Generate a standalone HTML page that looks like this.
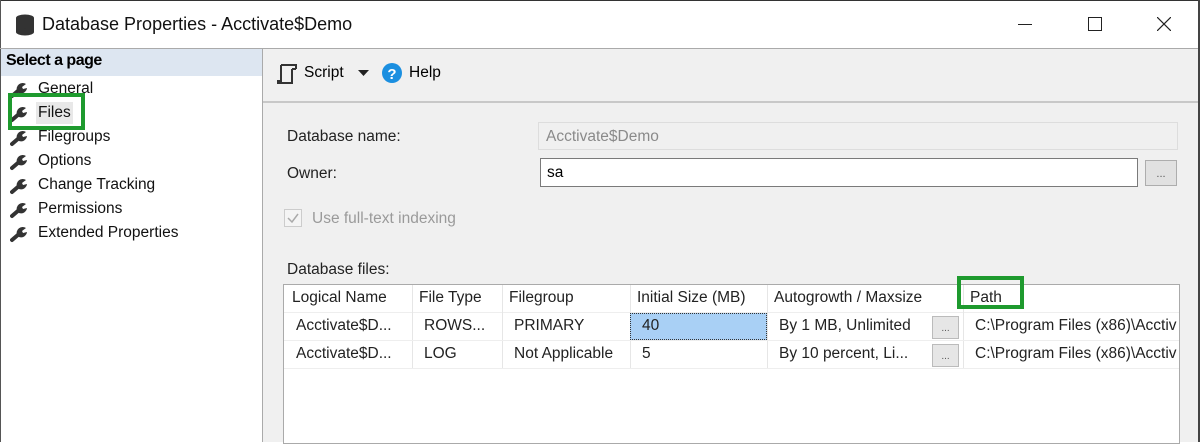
<!DOCTYPE html>
<html><head><style>
*{margin:0;padding:0;box-sizing:border-box}
body{width:1200px;height:442px;position:relative;overflow:hidden;background:#fff;font-family:"Liberation Sans",sans-serif;font-size:15.5px;color:#000}
.a{position:absolute;white-space:nowrap}
</style></head><body>
<div class="a" style="left:0;top:0;width:1200px;height:1px;background:#333"></div>
<div class="a" style="left:1198px;top:0;width:2px;height:442px;background:#444"></div>
<div class="a" style="left:0;top:0;width:1px;height:442px;background:#555"></div>
<svg class="a" style="left:15px;top:14px" width="20" height="22"><ellipse cx="10" cy="4" rx="9" ry="3.5" fill="#333"/><rect x="1" y="4" width="18" height="14" fill="#333"/><ellipse cx="10" cy="18" rx="9" ry="3.5" fill="#333"/></svg>
<div class="a" style="left:42px;top:14px;font-size:18px;color:#111">Database Properties - Acctivate$Demo</div>
<div class="a" style="left:1018px;top:24px;width:14px;height:1px;background:#222"></div>
<div class="a" style="left:1088px;top:17px;width:14px;height:14px;border:1px solid #222"></div>
<svg class="a" style="left:1157px;top:17px" width="14" height="14"><path d="M0 0L14 14M14 0L0 14" stroke="#222" stroke-width="1.2"/></svg>
<div class="a" style="left:0;top:48px;width:1198px;height:1px;background:#aaa"></div>
<div class="a" style="left:1px;top:49px;width:261px;height:27px;background:#dde6f1"></div>
<div class="a" style="left:6px;top:52px;font-weight:bold;font-size:16px;letter-spacing:-0.5px">Select a page</div>
<div class="a" style="left:262px;top:49px;width:1px;height:393px;background:#aaa"></div>
<div class="a" style="left:36px;top:102px;width:37px;height:22px;background:#e8e8e8"></div>
<div id="L"></div>
<div class="a" style="left:8px;top:93px;width:77px;height:37px;border:4px solid #1e9a2e"></div>
<div class="a" style="left:263px;top:49px;width:935px;height:393px;background:#f0f0f0"></div>
<div class="a" style="left:263px;top:101px;width:935px;height:2px;background:#c8c8c8"></div>
<svg class="a" style="left:276px;top:63px" width="22" height="22"><path d="M5 2H20V6M5 2V18H2V20H16V6M16 6H20" fill="none" stroke="#333" stroke-width="2"/></svg>
<div class="a" style="left:304px;top:64px">Script</div>
<svg class="a" style="left:358px;top:70px" width="12" height="8"><path d="M0 0H11L5.5 6Z" fill="#222"/></svg>
<svg class="a" style="left:381px;top:62px" width="22" height="22"><circle cx="11" cy="11" r="10" fill="#1b8fe0"/><text x="11" y="17" text-anchor="middle" font-family="Liberation Sans" font-weight="bold" font-size="15" fill="#fff">?</text></svg>
<div class="a" style="left:409px;top:64px">Help</div>
<div class="a" style="left:287px;top:128px;color:#222">Database name:</div>
<div class="a" style="left:538px;top:122px;width:640px;height:28px;border:1px solid #ddd;background:#f0f0f0"></div>
<div class="a" style="left:546px;top:128px;color:#8a8a8a">Acctivate$Demo</div>
<div class="a" style="left:287px;top:165px;color:#222">Owner:</div>
<div class="a" style="left:540px;top:158px;width:598px;height:29px;border:1px solid #7a7a7a;background:#fff"></div>
<div class="a" style="left:547px;top:164px">sa</div>
<div class="a" style="left:1145px;top:160px;width:32px;height:26px;border:1px solid #adadad;background:#e1e1e1;font-size:11px;text-align:center;line-height:26px;color:#555">...</div>
<div class="a" style="left:284px;top:209px;width:18px;height:18px;border:1px solid #ccc;background:#f4f4f4"></div>
<svg class="a" style="left:286px;top:211px" width="14" height="14"><path d="M2 7L6 11L12 3" fill="none" stroke="#aaa" stroke-width="1.5"/></svg>
<div class="a" style="left:312px;top:210px;color:#9a9a9a">Use full-text indexing</div>
<div class="a" style="left:287px;top:261px;color:#222">Database files:</div>
<div class="a" style="left:283px;top:284px;width:897px;height:160px;border:1px solid #aaa;background:#fff"></div>
<div id="T"></div>
<div class="a" style="left:957px;top:276px;width:67px;height:33px;border:4px solid #1e9a2e"></div>
<script>
var L=document.getElementById('L'),h='';
['General','Files','Filegroups','Options','Change Tracking','Permissions','Extended Properties'].forEach(function(t,i){var y=80+i*24;
h+='<svg class="a" style="left:10px;top:'+(y+2)+'px" width="18" height="18"><path d="M2 14L9 8" stroke="#333" stroke-width="4" stroke-linecap="round"/><path d="M7 9A6 6 0 0 1 16 2L12 5L13 7L17 6A6 6 0 0 1 9 11Z" fill="#333"/></svg>';
h+='<div class="a" style="left:38px;top:'+y+'px;color:#111">'+t+'</div>';});
L.innerHTML=h;
var T=document.getElementById('T');h='';
var cols=[285,412,502,630,767,963];
h+='<div class="a" style="left:284px;top:312px;width:895px;height:1px;background:#eee"></div>';
['Logical Name','File Type','Filegroup','Initial Size (MB)','Autogrowth / Maxsize','Path'].forEach(function(t,i){h+='<div class="a" style="left:'+(cols[i]+7)+'px;top:289px;color:#222">'+t+'</div>';if(i>0)h+='<div class="a" style="left:'+cols[i]+'px;top:285px;width:1px;height:83px;background:#e6e6e6"></div>';});
h+='<div class="a" style="left:630px;top:313px;width:137px;height:27px;background:#a9d0f5;border:1px dotted #333"></div>';
var rows=[['Acctivate$D...','ROWS...','PRIMARY','40','By 1 MB, Unlimited','C:\\Program Files (x86)\\Acctiv'],['Acctivate$D...','LOG','Not Applicable','5','By 10 percent, Li...','C:\\Program Files (x86)\\Acctiv']];
rows.forEach(function(r,j){var y=312+j*28;r.forEach(function(t,i){h+='<div class="a" style="left:'+(cols[i]+(i==0?11:12))+'px;top:'+(y+5)+'px;color:#222">'+t+'</div>';});
h+='<div class="a" style="left:932px;top:'+(y+4)+'px;width:27px;height:23px;border:1px solid #bbb;background:#e6e6e6;font-size:10px;text-align:center;line-height:24px;color:#555">...</div>';
h+='<div class="a" style="left:284px;top:'+(y+28)+'px;width:895px;height:1px;background:#eee"></div>';});
T.innerHTML=h;
</script>
</body></html>
